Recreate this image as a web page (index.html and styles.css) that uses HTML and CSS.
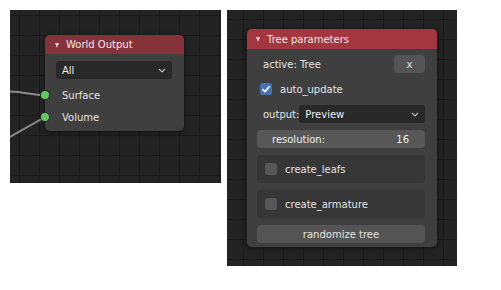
FILE: index.html
```html
<!DOCTYPE html>
<html lang="en">
<head>
    <meta charset="UTF-8">
    <title>Nodes</title>
    <link rel="stylesheet" href="styles.css">
</head>
<body>
    <div class="editors">
        <div class="canvas canvas-world">
            <!-- links drawn on the free canvas -->
            <svg class="links" width="211" height="173">
                <path d="M0 81.5 C 14 82, 24 85, 35 85" />
                <path d="M0 127 L 35 107" />
            </svg>
            <div class="node node-world">
                <div class="node-header">
                    <span class="arrow"></span>
                    <span>World Output</span>
                </div>
                <div class="node-body">
                    <div class="dropdown">
                        <span>All</span>
                        <svg class="chevron" width="8" height="5"><path d="M1 1 L4 4 L7 1" /></svg>
                    </div>
                    <div class="sockets">
                        <div class="socket-row"><span class="socket"></span>Surface</div>
                        <div class="socket-row"><span class="socket"></span>Volume</div>
                    </div>
                </div>
            </div>
        </div>

        <div class="canvas canvas-tree">
            <div class="node node-tree">
                <div class="node-header">
                    <span class="arrow"></span>
                    <span>Tree parameters</span>
                </div>
                <div class="node-body">
                    <div class="row">
                        <span class="label">active: Tree</span>
                        <button class="btn btn-x">x</button>
                    </div>
                    <div class="row check-row">
                        <span class="checkbox checked">
                            <svg width="12" height="12"><path d="M2.5 6.2 L5 8.6 L9.6 3.4" /></svg>
                        </span>
                        <span>auto_update</span>
                    </div>
                    <div class="row">
                        <span class="label">output:</span>
                        <div class="dropdown dropdown-output">
                            <span>Preview</span>
                            <svg class="chevron" width="8" height="5"><path d="M1 1 L4 4 L7 1" /></svg>
                        </div>
                    </div>
                    <div class="slider">
                        <span>resolution:</span>
                        <span>16</span>
                    </div>
                    <div class="box">
                        <span class="checkbox"></span>
                        <span>create_leafs</span>
                    </div>
                    <div class="box">
                        <span class="checkbox"></span>
                        <span>create_armature</span>
                    </div>
                    <button class="btn btn-wide">randomize tree</button>
                </div>
            </div>
        </div>
    </div>
</body>
</html>
```

FILE: styles.css
```css
*{
    margin: 0;
    padding: 0;
    box-sizing: border-box;
}
body{
    background-color: #ffffff;
    font-family: "DejaVu Sans", "Liberation Sans", sans-serif;
    font-size: 10px;
    color: #e4e4e4;
}
.editors{
    display: flex;
    align-items: flex-start;
    gap: 6px;
    padding: 10px 0 0 10px;
}
.canvas{
    position: relative;
    background-color: #232323;
    background-image:
        linear-gradient(to right, #191919 1px, transparent 1px),
        linear-gradient(to bottom, #191919 1px, transparent 1px);
    background-size: 20px 20px;
}
.canvas-world{
    width: 211px;
    height: 173px;
    background-position: 9px 5px;
}
.canvas-tree{
    width: 230px;
    height: 256px;
    background-position: 16px 9px;
}
.links{
    position: absolute;
    left: 0;
    top: 0;
}
.links path{
    fill: none;
    stroke: #8c8c8c;
    stroke-width: 2;
}
.node{
    position: absolute;
    background-color: #3f3f3f;
    border-radius: 5px;
    box-shadow: 0 1px 5px rgba(0, 0, 0, 0.55);
}
.node-world{
    left: 35px;
    top: 25px;
    width: 139px;
    height: 96px;
}
.node-tree{
    left: 20px;
    top: 19px;
    width: 190px;
    height: 218px;
}
.node-header{
    display: flex;
    align-items: center;
    gap: 7px;
    height: 19px;
    padding-left: 10px;
    border-radius: 5px 5px 0 0;
    color: #f0e6e6;
}
.node-world .node-header{
    background-color: #85323a;
    height: 19px;
}
.node-tree .node-header{
    background-color: #a3363f;
    height: 20px;
    padding-left: 9px;
}
.arrow{
    width: 0;
    height: 0;
    border-left: 2.5px solid transparent;
    border-right: 2.5px solid transparent;
    border-top: 5px solid #e8cccc;
    margin-top: 1px;
}
.node-world .node-body{
    padding: 7px 12px 0 11px;
}
.dropdown{
    display: flex;
    align-items: center;
    justify-content: space-between;
    height: 18px;
    padding: 0 6px;
    background-color: #282828;
    border-radius: 3px;
    color: #eeeeee;
}
.chevron path{
    fill: none;
    stroke: #bbbbbb;
    stroke-width: 1.2;
}
.sockets{
    padding-top: 5px;
}
.socket-row{
    position: relative;
    display: flex;
    align-items: center;
    height: 22px;
    padding-left: 6px;
}
.socket{
    position: absolute;
    left: -15px;
    width: 8px;
    height: 8px;
    border-radius: 50%;
    background-color: #63c763;
    box-shadow: 0 0 0 1px #2b2b2b;
}
.node-tree .node-body{
    display: flex;
    flex-direction: column;
    gap: 7px;
    padding: 6px 12px 0 10px;
}
.row{
    display: flex;
    align-items: center;
    justify-content: space-between;
    height: 18px;
}
.label{
    padding-left: 6px;
}
.btn{
    height: 18px;
    border: 0;
    border-radius: 4px;
    background-color: #545454;
    color: #e4e4e4;
    font-family: inherit;
    font-size: 10px;
}
.btn-x{
    width: 31px;
}
.btn-wide{
    width: 100%;
}
.check-row{
    justify-content: flex-start;
    gap: 8px;
    padding-left: 3px;
}
.checkbox{
    display: flex;
    width: 12px;
    height: 12px;
    border-radius: 3px;
    background-color: #575757;
}
.checkbox.checked{
    background-color: #4772b3;
}
.checkbox path{
    fill: none;
    stroke: #ffffff;
    stroke-width: 1.6;
}
.dropdown-output{
    width: 126px;
}
.slider{
    display: flex;
    align-items: center;
    justify-content: space-between;
    height: 18px;
    padding: 0 16px 0 15px;
    background-color: #575757;
    border-radius: 4px;
    color: #eeeeee;
}
.box{
    display: flex;
    align-items: center;
    gap: 8px;
    height: 28px;
    padding-left: 8px;
    background-color: #363636;
    border-radius: 4px;
}
```
